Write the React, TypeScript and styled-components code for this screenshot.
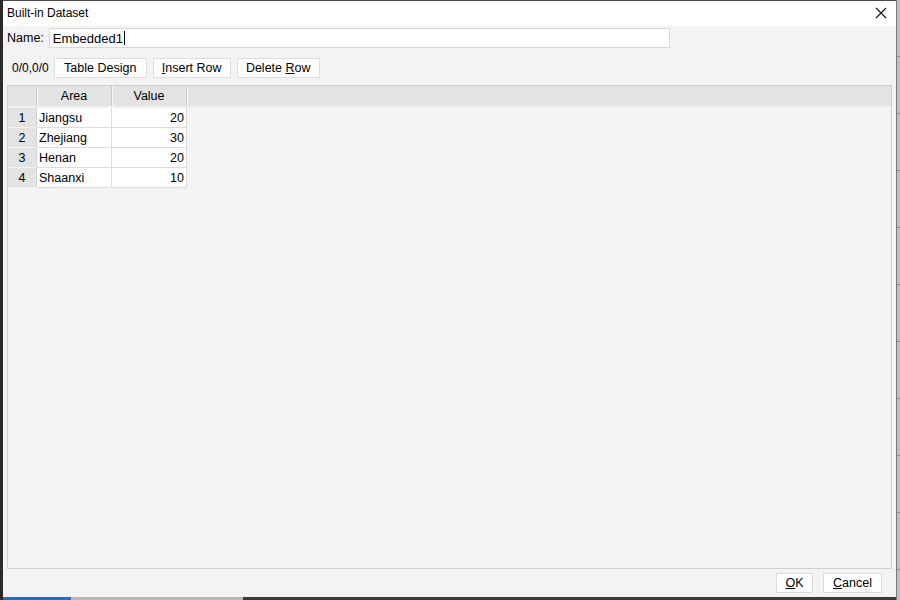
import styled, { createGlobalStyle } from "styled-components";

const rows = [
  { area: "Jiangsu", value: 20 },
  { area: "Zhejiang", value: 30 },
  { area: "Henan", value: 20 },
  { area: "Shaanxi", value: 10 },
];

export default function App() {
  return (
    <>
      <Global />
      <Desktop>
        <LeftEdge />
        <Column>
          <Window>
            <TitleBar>
              <Title>Built-in Dataset</Title>
              <CloseButton aria-label="close">
                <svg width="12" height="12" viewBox="0 0 12 12">
                  <path d="M1 1L11 11M11 1L1 11" stroke="#111" strokeWidth="1.1" />
                </svg>
              </CloseButton>
            </TitleBar>
            <Body>
              <NameRow>
                <Label>Name:</Label>
                <NameInput>
                  Embedded1<Caret />
                </NameInput>
              </NameRow>
              <Toolbar>
                <Counter>0/0,0/0</Counter>
                <Button width={93}>
                  <span>Table Design</span>
                </Button>
                <Button width={78}>
                  <span>
                    <u>I</u>nsert Row
                  </span>
                </Button>
                <Button width={83}>
                  <span>
                    Delete{" "}<u>R</u>ow
                  </span>
                </Button>
              </Toolbar>
              <GridPanel>
                <HeaderBand>
                  <HeadCell width={29} />
                  <HeadCell width={75}>Area</HeadCell>
                  <HeadCell width={75}>Value</HeadCell>
                </HeaderBand>
                {rows.map((r, i) => (
                  <Row key={r.area}>
                    <RowNum>{i + 1}</RowNum>
                    <Cell width={75}>{r.area}</Cell>
                    <Cell width={75} right>
                      {r.value}
                    </Cell>
                  </Row>
                ))}
              </GridPanel>
              <Footer>
                <Button width={37}>
                  <span>
                    <u>O</u>K
                  </span>
                </Button>
                <Button width={59}>
                  <span>
                    <u>C</u>ancel
                  </span>
                </Button>
              </Footer>
            </Body>
          </Window>
          <BottomStrip />
        </Column>
        <RightEdge />
      </Desktop>
    </>
  );
}

//styles
const Global = createGlobalStyle`
  html, body {
    margin: 0;
    padding: 0;
    width: 900px;
    height: 600px;
    overflow: hidden;
    font-family: "Liberation Sans", Arial, sans-serif;
    font-size: 12.5px;
    color: #000;
  }
`;

const Desktop = styled.div`
  display: flex;
  width: 900px;
  height: 600px;
  background: #c8c8c8;
`;

const LeftEdge = styled.div`
  width: 3px;
  background: #2a2a2a;
`;

const RightEdge = styled.div`
  width: 3px;
  background: repeating-linear-gradient(
    to bottom,
    #bfbfbf 0,
    #bfbfbf 56px,
    #8a8a8a 56px,
    #8a8a8a 57px
  );
  border-left: 1px solid #7a7a7a;
`;

const Column = styled.div`
  display: flex;
  flex-direction: column;
  width: 893px;
`;

const BottomStrip = styled.div`
  height: 3px;
  background: linear-gradient(
    to right,
    #1f6fc4 0,
    #1f6fc4 68px,
    #b9b9b9 68px,
    #b9b9b9 240px,
    #3b3b3b 240px
  );
`;

const Window = styled.div`
  flex: 1;
  display: flex;
  flex-direction: column;
  border-top: 1px solid #4a4a4a;
  background: #f3f3f5;
`;

const TitleBar = styled.div`
  height: 25px;
  display: flex;
  align-items: center;
  justify-content: space-between;
  background: #fff;
  padding: 0 8px 0 4px;
`;

const Title = styled.span`
  font-size: 12px;
  margin-top: -2px;
`;

const CloseButton = styled.div`
  display: flex;
  width: 14px;
  height: 14px;
  align-items: center;
  justify-content: center;
  margin-top: -2px;
`;

const Body = styled.div`
  flex: 1;
  display: flex;
  flex-direction: column;
  padding: 2px 4px 4px 4px;
`;

const NameRow = styled.div`
  display: flex;
  align-items: center;
  gap: 5px;
  height: 20px;
`;

const Label = styled.span``;

const NameInput = styled.div`
  width: 616px;
  height: 18px;
  display: flex;
  align-items: center;
  padding-left: 3px;
  background: #fff;
  border: 1px solid #d9d9d9;
  font-size: 13px;
`;

const Caret = styled.span`
  display: inline-block;
  width: 1px;
  height: 14px;
  background: #000;
  margin-left: 1px;
`;

const Toolbar = styled.div`
  display: flex;
  align-items: center;
  gap: 6px;
  margin-top: 10px;
  padding-left: 5px;
  height: 20px;
`;

const Counter = styled.span`
  font-size: 12px;
  margin-right: -1px;
`;

const Button = styled.div<{ width: number }>`
  width: ${(p) => p.width}px;
  height: 20px;
  box-sizing: border-box;
  display: flex;
  align-items: center;
  justify-content: center;
  background: #fff;
  border: 1px solid #dcdcdc;
  white-space: pre;
  u {
    text-decoration: underline;
    text-underline-offset: 1px;
  }
`;

const GridPanel = styled.div`
  flex: 1;
  margin-top: 7px;
  border: 1px solid #d0d0d0;
  background: #f4f4f6;
  display: flex;
  flex-direction: column;
`;

const HeaderBand = styled.div`
  display: flex;
  height: 20px;
  background: #e3e3e3;
  border-bottom: 2px solid #f0f0f0;
`;

const HeadCell = styled.div<{ width: number }>`
  width: ${(p) => p.width}px;
  box-sizing: border-box;
  display: flex;
  align-items: center;
  justify-content: center;
  border-right: 1px solid #c9c9c9;
  box-shadow: 1px 0 0 #f7f7f7;
`;

const Row = styled.div`
  display: flex;
  height: 20px;
`;

const RowNum = styled.div`
  width: 29px;
  box-sizing: border-box;
  display: flex;
  align-items: center;
  justify-content: center;
  background: #e3e3e3;
  border-right: 1px solid #d4d4d4;
  border-bottom: 1px solid #f2f2f2;
`;

const Cell = styled.div<{ width: number; right?: boolean }>`
  width: ${(p) => p.width}px;
  box-sizing: border-box;
  display: flex;
  align-items: center;
  justify-content: ${(p) => (p.right ? "flex-end" : "flex-start")};
  padding: 0 2px;
  background: #fff;
  border-right: 1px solid #dcdcdc;
  border-bottom: 1px solid #dcdcdc;
`;

const Footer = styled.div`
  display: flex;
  justify-content: flex-end;
  gap: 10px;
  padding: 4px 10px 0 0;
  height: 20px;
`;
